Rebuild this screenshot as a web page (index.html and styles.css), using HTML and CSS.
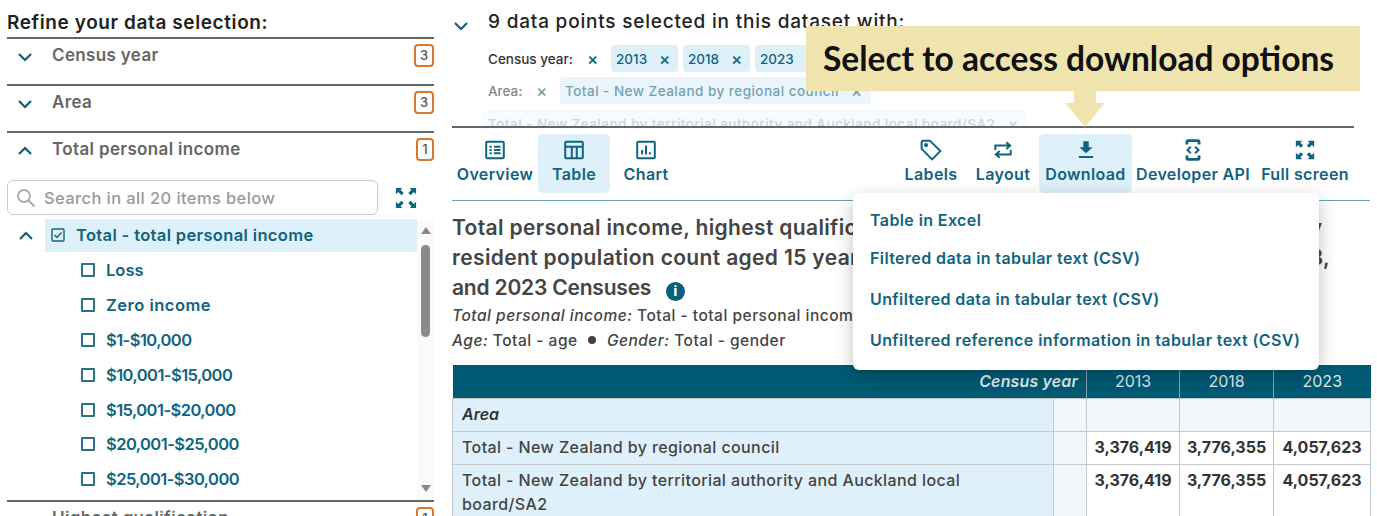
FILE: index.html
```html
<!DOCTYPE html>
<html lang="en">

<head>
    <meta charset="UTF-8">
    <meta name="viewport" content="width=device-width, initial-scale=1.0">
    <title>Total personal income - data selection</title>
    <link rel="stylesheet" href="styles.css">
</head>

<body>
    <div class="sidebar">
        <h2 class="sidebar-title">Refine your data selection:</h2>

        <div class="section-row">
            <svg class="chevron" viewBox="0 0 16 10"><path d="M2 2l6 6 6-6" /></svg>
            <span class="section-name">Census year</span>
            <span class="count-badge">3</span>
        </div>
        <div class="section-row">
            <svg class="chevron" viewBox="0 0 16 10"><path d="M2 2l6 6 6-6" /></svg>
            <span class="section-name">Area</span>
            <span class="count-badge">3</span>
        </div>
        <div class="section-row">
            <svg class="chevron" viewBox="0 0 16 10"><path d="M2 8l6-6 6 6" /></svg>
            <span class="section-name">Total personal income</span>
            <span class="count-badge narrow">1</span>
        </div>

        <div class="search-row">
            <div class="search-box">
                <svg class="search-icon" viewBox="0 0 20 20"><circle cx="8" cy="8" r="6" /><path d="M12.500 12.500l6 6" /></svg>
                <span>Search in all 20 items below</span>
            </div>
            <svg class="expand-icon" viewBox="0 0 24 24">
                <path d="M1 1h7L6 3l3.500 3.500-2.500 2.500L3.500 5.500 1 8z" />
                <path d="M23 1h-7l2 2-3.500 3.500 2.500 2.500 3.500-3.500L23 8z" />
                <path d="M1 23h7l-2-2 3.500-3.500-2.500-2.500-3.500 3.500L1 16z" />
                <path d="M23 23h-7l2-2-3.500-3.500 2.500-2.500 3.500 3.500 2.500-2.500z" />
            </svg>
        </div>

        <div class="tree">
            <div class="tree-list">
                <div class="tree-parent">
                    <svg class="chevron" viewBox="0 0 16 10"><path d="M2 8l6-6 6 6" /></svg>
                    <div class="tree-selected">
                        <svg class="check-icon" viewBox="0 0 14 14"><rect x="1" y="1" width="12" height="12" rx="1" /><path d="M3.500 7l2.500 2.500 4.500-5" /></svg>
                        <span>Total - total personal income</span>
                    </div>
                </div>
                <div class="tree-item"><span class="check-box"></span>Loss</div>
                <div class="tree-item zero"><span class="check-box"></span>Zero income</div>
                <div class="tree-item amount"><span class="check-box"></span>$1-$10,000</div>
                <div class="tree-item amount"><span class="check-box"></span>$10,001-$15,000</div>
                <div class="tree-item amount"><span class="check-box"></span>$15,001-$20,000</div>
                <div class="tree-item amount"><span class="check-box"></span>$20,001-$25,000</div>
                <div class="tree-item amount"><span class="check-box"></span>$25,001-$30,000</div>
            </div>
            <div class="scrollbar">
                <span class="arrow-up"></span>
                <span class="scroll-thumb"></span>
                <span class="arrow-down"></span>
            </div>
        </div>

        <div class="section-row">
            <svg class="chevron" viewBox="0 0 16 10"><path d="M2 2l6 6 6-6" /></svg>
            <span class="section-name">Highest qualification</span>
            <span class="count-badge narrow">1</span>
        </div>
    </div>

    <div class="main">
        <div class="selection">
            <div class="selection-title">
                <svg class="chevron" viewBox="0 0 16 10"><path d="M2 2l6 6 6-6" /></svg>
                <span>9 data points selected in this dataset with:</span>
            </div>
            <div class="chip-row">
                <span class="chip-label">Census year:</span>
                <span class="chip-x">×</span>
                <span class="chip">2013<i>×</i></span>
                <span class="chip">2018<i>×</i></span>
                <span class="chip">2023<i>×</i></span>
            </div>
            <div class="chip-row fade-some">
                <span class="chip-label">Area:</span>
                <span class="chip-x">×</span>
                <span class="chip">Total - New Zealand by regional council<i>×</i></span>
            </div>
            <div class="chip-row fade-more">
                <span class="chip">Total - New Zealand by territorial authority and Auckland local board/SA2<i>×</i></span>
            </div>
        </div>

        <div class="toolbar">
            <div class="tool-group">
                <div class="tool-btn overview">
                    <svg viewBox="0 0 20 20"><rect x="2" y="2.500" width="16" height="15" rx="1" /><path d="M5 7h2M5 10h2M5 13h2M9 7h6M9 10h6M9 13h6" /></svg>
                    Overview
                </div>
                <div class="tool-btn table-btn active">
                    <svg viewBox="0 0 20 20"><rect x="2" y="2.500" width="16" height="15" rx="1" /><path d="M2 7h16M8 7v10.500M12.500 7v10.500" /></svg>
                    Table
                </div>
                <div class="tool-btn chart-btn">
                    <svg viewBox="0 0 20 20"><rect x="2" y="2.500" width="16" height="15" rx="1" /><path d="M6.500 14v-4M10 14V6M13.500 14v-2" /></svg>
                    Chart
                </div>
            </div>
            <div class="tool-group right">
                <div class="tool-btn labels-btn">
                    <svg viewBox="0 0 20 20"><path d="M1.500 3c0-.8.700-1.500 1.500-1.500h6l9.500 9.500-7.500 7.500L1.500 9z" /><circle cx="5.500" cy="5.500" r="1" /></svg>
                    Labels
                </div>
                <div class="tool-btn layout-btn">
                    <svg viewBox="0 0 20 20"><path d="M3 10V6h13M13 3l3.500 3-3.500 3M17 10v4H4M7 11l-3.500 3L7 17" /></svg>
                    Layout
                </div>
                <div class="tool-btn download-btn active">
                    <svg class="solid" viewBox="0 0 20 20"><path d="M7.500 2h5v5.500H16L10 13 4 7.500h3.500zM3.500 15.500h13v1.800h-13z" /></svg>
                    Download
                </div>
                <div class="tool-btn api-btn">
                    <svg viewBox="0 0 20 20"><path class="thick" d="M4.500 5V2.500c0-.6.400-1 1-1h9c.6 0 1 .4 1 1V5M4.500 15v2.500c0 .6.400 1 1 1h9c.6 0 1-.4 1-1V15" /><path d="M8 7l-3 3 3 3M12 7l3 3-3 3" /></svg>
                    Developer API
                </div>
                <div class="tool-btn full-btn">
                    <svg class="solid" viewBox="0 0 24 24">
                        <path d="M2 2h7L7 4l3 3-2.500 2.500-3-3L2 9z" />
                        <path d="M22 2h-7l2 2-3 3 2.500 2.500 3-3L22 9z" />
                        <path d="M2 22h7l-2-2 3-3-2.500-2.500-3 3L2 15z" />
                        <path d="M22 22h-7l2-2-3-3 2.500-2.500 3 3 2.500-2.500z" />
                    </svg>
                    Full screen
                </div>
            </div>
        </div>

        <div class="table-head">
            <h1 class="table-title">
                <span class="nowrap">Total personal income, highest qualification, age and gender for the census usually</span><br>
                <span class="nowrap">resident population count aged 15 years and over, by local areas, for the 2013, 2018,</span><br>
                <span class="title-end">and 2023 Censuses</span>
                <span class="info-icon">i</span>
            </h1>
            <p class="table-note"><em>Total personal income:</em> Total - total personal income</p>
            <p class="table-note"><em>Age:</em> Total - age <span class="dot"></span> <em>Gender:</em> Total - gender</p>
        </div>

        <table class="data-table">
            <colgroup>
                <col class="col-stub">
                <col class="col-gap">
                <col class="col-2013">
                <col class="col-2018">
                <col class="col-2023">
            </colgroup>
            <thead>
                <tr>
                    <th colspan="2" class="year-label">Census year</th>
                    <th>2013</th>
                    <th>2018</th>
                    <th>2023</th>
                </tr>
            </thead>
            <tbody>
                <tr class="sub-head">
                    <td class="stub"><em>Area</em></td>
                    <td></td>
                    <td></td>
                    <td></td>
                    <td></td>
                </tr>
                <tr>
                    <td class="stub">Total - New Zealand by regional council</td>
                    <td class="gap"></td>
                    <td class="num">3,376,419</td>
                    <td class="num">3,776,355</td>
                    <td class="num">4,057,623</td>
                </tr>
                <tr>
                    <td class="stub">Total - New Zealand by territorial authority and Auckland local<br>board/SA2</td>
                    <td class="gap"></td>
                    <td class="num">3,376,419</td>
                    <td class="num">3,776,355</td>
                    <td class="num">4,057,623</td>
                </tr>
            </tbody>
        </table>
    </div>

    <div class="download-menu">
        <div class="menu-item first">Table in Excel</div>
        <div class="menu-item">Filtered data in tabular text (CSV)</div>
        <div class="menu-item">Unfiltered data in tabular text (CSV)</div>
        <div class="menu-item">Unfiltered reference information in tabular text (CSV)</div>
    </div>

    <div class="callout">Select to access download options</div>
    <svg class="callout-arrow" viewBox="0 0 40 36"><path d="M9 0h22v12h9L20 36 0 12h9z" /></svg>
</body>

</html>
```

FILE: styles.css
```css
html,
body {
    height: 516px;
    overflow: hidden;
}

body {
    margin: 0;
    padding-left: 7px;
    display: flex;
    position: relative;
    background: white;
    font-family: Inter, "Open Sans", sans-serif;
    color: #333;
}

svg {
    display: block;
    fill: none;
    stroke: #0f6480;
    stroke-width: 1.8;
}

.chevron {
    width: 16px;
    height: 10px;
    flex: none;
    stroke: #0f5f78;
    stroke-width: 2.2;
}

/* left column */

.sidebar {
    width: 427px;
    flex: none;
}

.sidebar-title {
    margin: 0;
    height: 37px;
    padding-top: 11px;
    box-sizing: border-box;
    font-size: 19px;
    line-height: 24px;
    font-weight: 600;
    letter-spacing: 0.6px;
    color: #222;
}

.section-row {
    height: 47px;
    box-sizing: border-box;
    border-top: 2px solid #666;
    display: flex;
    align-items: flex-start;
    padding: 5px 0 0 10px;
}

.section-row .chevron {
    margin-top: 8px;
}

.section-name {
    margin-left: 19px;
    font-size: 17px;
    line-height: 22px;
    font-weight: 600;
    color: #666;
    letter-spacing: 0.35px;
}

.count-badge {
    margin-left: auto;
    width: 20px;
    height: 23px;
    box-sizing: border-box;
    border: 2px solid #d9772b;
    border-radius: 4px;
    font-size: 13px;
    line-height: 18px;
    font-weight: 500;
    text-align: center;
    color: #555;
}

.count-badge.narrow {
    width: 18px;
}

.search-row {
    display: flex;
    align-items: center;
    margin-top: 2px;
}

.search-box {
    width: 371px;
    height: 35px;
    box-sizing: border-box;
    border: 1px solid #ccc;
    border-radius: 6px;
    display: flex;
    align-items: center;
    padding-left: 8px;
    font-size: 16.500px;
    font-weight: 500;
    letter-spacing: 0.4px;
    color: #999;
}

.search-box span {
    margin-left: 8px;
}

.search-icon {
    width: 20px;
    height: 20px;
    stroke: #aaa;
}

.expand-icon {
    width: 22px;
    height: 22px;
    margin-left: 17px;
    fill: #0f6480;
    stroke: none;
}

.tree {
    display: flex;
    margin-top: 4px;
    height: 281px;
}

.tree-list {
    flex: 1;
}

.tree-parent {
    display: flex;
    align-items: center;
    padding-left: 11px;
}

.tree-selected {
    margin-left: 11px;
    flex: 1;
    height: 33px;
    box-sizing: border-box;
    padding: 0 0 2px 6px;
    background: #def0fa;
    display: flex;
    align-items: center;
    font-size: 16.500px;
    font-weight: 600;
    letter-spacing: 0.35px;
    color: #0f6480;
}

.check-icon {
    width: 14px;
    height: 14px;
    margin-right: 11px;
    stroke-width: 1.400;
}

.tree-item {
    height: 34.800px;
    display: flex;
    align-items: center;
    padding-left: 74px;
    font-size: 16.500px;
    font-weight: 600;
    color: #0f6480;
}

.tree-parent + .tree-item {
    margin-top: 1px;
}

.tree-item.zero {
    letter-spacing: 0.5px;
}

.tree-item.amount {
    letter-spacing: -0.55px;
}

.check-box {
    width: 10px;
    height: 10px;
    border: 2px solid #2a7389;
    border-radius: 1px;
    margin-right: 11px;
}

.scrollbar {
    width: 17px;
    background: #fafafa;
    display: flex;
    flex-direction: column;
    align-items: center;
}

.arrow-up {
    margin-top: 8px;
    border: 5.500px solid transparent;
    border-top: 0;
    border-bottom: 7px solid #888;
}

.scroll-thumb {
    margin-top: 11px;
    width: 9px;
    height: 92px;
    border-radius: 5px;
    background: #8a8a8a;
}

.arrow-down {
    margin-top: auto;
    margin-bottom: 8px;
    border: 5.500px solid transparent;
    border-bottom: 0;
    border-top: 7px solid #888;
}

/* right column */

.main {
    margin-left: 18px;
    width: 918px;
    flex: none;
}

.selection {
    height: 126px;
    width: 902px;
    overflow: hidden;
    box-sizing: border-box;
    padding-top: 10px;
}

.selection-title {
    display: flex;
    align-items: center;
    font-size: 19px;
    line-height: 24px;
    font-weight: 500;
    color: #222;
    letter-spacing: 0.8px;
}

.selection-title .chevron {
    margin: 8px 0 0 1px;
}

.selection-title span {
    margin-left: 19px;
}

.chip-row {
    display: flex;
    align-items: center;
    margin-top: 5px;
    padding-left: 36px;
    font-size: 13.500px;
    font-weight: 500;
}

.selection-title + .chip-row {
    margin-top: 11px;
}

.chip-label {
    color: #333;
    width: 99px;
    white-space: nowrap;
}

.chip-x {
    width: 24px;
    font-size: 17px;
    color: #0f5f78;
}

.chip {
    height: 27px;
    display: flex;
    align-items: center;
    background: #def0fa;
    border-radius: 4px;
    padding: 0 5px;
    margin-right: 4.500px;
    color: #0f6480;
    white-space: nowrap;
}

.chip i {
    font-style: normal;
    font-size: 17px;
    margin-left: 12px;
    margin-right: 3px;
}

.fade-some {
    opacity: 0.6;
}

.fade-some .chip-label {
    width: 48px;
}

.fade-some .chip,
.fade-more .chip {
    letter-spacing: 0.48px;
}

.fade-more {
    opacity: 0.25;
    margin-top: 6px;
    padding-left: 31px;
}

.toolbar {
    border-top: 2px solid #666;
    width: 902px;
    height: 74px;
    box-sizing: border-box;
    padding-top: 6px;
    display: flex;
    justify-content: space-between;
    position: relative;
}

.toolbar::after {
    content: "";
    position: absolute;
    left: 0;
    top: 72px;
    width: 918px;
    height: 1px;
    background: #6aa3bb;
}

.tool-group {
    display: flex;
}

.tool-group.right {
    margin-right: -2px;
}

.tool-btn {
    height: 59px;
    box-sizing: border-box;
    padding-top: 5px;
    border-radius: 5px;
    display: flex;
    flex-direction: column;
    align-items: center;
    font-size: 16px;
    line-height: 22px;
    font-weight: 600;
    letter-spacing: 0.35px;
    color: #0f6480;
    white-space: nowrap;
}

.tool-btn svg {
    width: 22px;
    height: 22px;
    margin-bottom: 2px;
}

.tool-btn svg.solid {
    fill: #0f6480;
    stroke: none;
}

.tool-btn .thick {
    stroke-width: 2.600;
}

.tool-btn.active {
    background: #def0fa;
}

.overview {
    width: 86px;
}

.table-btn {
    width: 72px;
}

.chart-btn {
    width: 72px;
}

.labels-btn {
    width: 72px;
}

.layout-btn {
    width: 72px;
}

.download-btn {
    width: 93px;
}

.api-btn {
    width: 122px;
}

.full-btn {
    width: 102px;
}

.table-head {
    padding-top: 13px;
}

.table-title {
    margin: 0;
    font-size: 21px;
    line-height: 30px;
    font-weight: 600;
    letter-spacing: 0.35px;
    color: #444;
}

.title-end {
    letter-spacing: -0.2px;
}

.nowrap {
    white-space: nowrap;
}

.info-icon {
    display: inline-block;
    width: 19px;
    height: 19px;
    margin-left: 9px;
    border-radius: 50%;
    background: #0b5f7c;
    color: white;
    font-size: 13px;
    line-height: 19px;
    font-weight: 800;
    letter-spacing: 0;
    text-align: center;
    vertical-align: -1px;
}

.table-note {
    margin: 0;
    height: 25px;
    font-size: 15.500px;
    line-height: 25px;
    font-weight: 500;
    letter-spacing: 0.5px;
    color: #444;
}

.table-note em {
    font-weight: 500;
}

.dot {
    display: inline-block;
    width: 8px;
    height: 8px;
    margin: 0 6px;
    border-radius: 50%;
    background: #444;
    vertical-align: 2px;
}

.data-table {
    margin-top: 12px;
    width: 918px;
    table-layout: fixed;
    border-collapse: collapse;
    font-size: 16px;
    line-height: 24px;
    font-weight: 500;
    color: #444;
}

.col-stub {
    width: 601px;
}

.col-gap {
    width: 33px;
}

.col-2013 {
    width: 93px;
}

.col-2018 {
    width: 94px;
}

.col-2023 {
    width: 97px;
}

.data-table th {
    height: 33px;
    padding: 0 0 1px;
    box-sizing: border-box;
    background: #005a74;
    color: #dfe9ee;
    font-weight: 400;
    text-align: center;
    border-left: 1px solid #7fa5b5;
}

.data-table th:first-child {
    border-left: 0;
}

.data-table .year-label {
    text-align: right;
    padding-right: 8px;
    font-style: italic;
    font-weight: 600;
    letter-spacing: 0.15px;
}

.data-table td {
    padding: 3px 9px 5px;
    border: 1px solid #c6c9cc;
    vertical-align: top;
}

.data-table .stub {
    background: #def0fa;
    letter-spacing: 0.39px;
}

.sub-head td {
    background: #f2f5fa;
}

.sub-head em {
    font-weight: 600;
    letter-spacing: 0;
    color: #333;
}

.gap {
    background: #f2f5fa;
}

.data-table .num {
    padding: 3px 0 5px;
    text-align: center;
    font-weight: 700;
    color: #333;
}

/* overlays */

.download-menu {
    position: absolute;
    left: 853px;
    top: 193px;
    width: 466px;
    height: 177px;
    box-sizing: border-box;
    padding: 16px 0 0 17px;
    background: white;
    border-radius: 6px;
    box-shadow: 0 6px 18px rgba(0, 0, 0, 0.25);
}

.menu-item {
    margin-top: 19px;
    font-size: 16px;
    line-height: 22px;
    font-weight: 600;
    letter-spacing: 0.4px;
    color: #0f6480;
    white-space: nowrap;
}

.menu-item.first {
    margin-top: 0;
}

.menu-item:nth-child(2) {
    margin-top: 16px;
}

.callout {
    position: absolute;
    left: 806px;
    top: 26px;
    width: 554px;
    height: 65px;
    box-sizing: border-box;
    padding-left: 17px;
    background: #f0e4ae;
    font-family: Lato, sans-serif;
    font-size: 33.500px;
    line-height: 65px;
    font-weight: 700;
    color: #111;
}

.callout-arrow {
    position: absolute;
    left: 1065px;
    top: 91px;
    width: 40px;
    height: 36px;
    fill: #f0e4ae;
    stroke: none;
}
```
